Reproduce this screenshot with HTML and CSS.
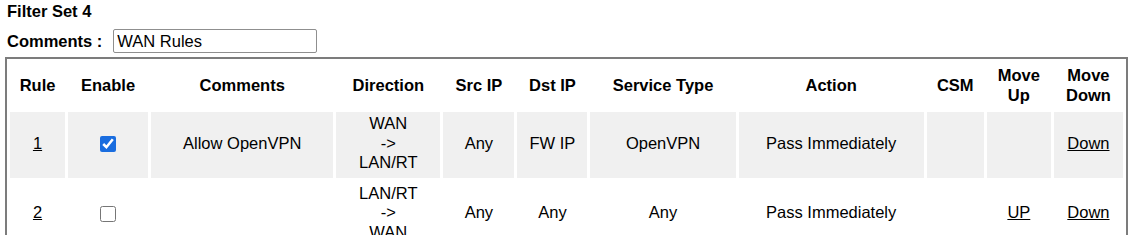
FILE: index.html
```html
<!DOCTYPE html>
<html lang="en">
<head>
    <meta charset="UTF-8">
    <title>Filter Set 4</title>
    <link rel="stylesheet" href="styles.css">
</head>
<body>
    <div class="page">
        <div class="set-title">Filter Set 4</div>
        <div class="comments-row">
            <label for="set-comments">Comments :</label>
            <input type="text" id="set-comments" class="comments-input" value="WAN Rules">
        </div>

        <table class="rules-table">
            <colgroup>
                <col style="width: 55px">
                <col style="width: 80px">
                <col style="width: 182px">
                <col style="width: 104px">
                <col style="width: 71px">
                <col style="width: 70px">
                <col style="width: 145px">
                <col style="width: 185px">
                <col style="width: 57px">
                <col style="width: 64px">
                <col style="width: 69px">
            </colgroup>
            <thead>
                <tr>
                    <th>Rule</th>
                    <th>Enable</th>
                    <th>Comments</th>
                    <th>Direction</th>
                    <th>Src IP</th>
                    <th>Dst IP</th>
                    <th>Service Type</th>
                    <th>Action</th>
                    <th>CSM</th>
                    <th>Move<br>Up</th>
                    <th>Move<br>Down</th>
                </tr>
            </thead>
            <tbody>
                <tr class="odd">
                    <td><a href="#">1</a></td>
                    <td><input type="checkbox" class="enable-box" checked></td>
                    <td>Allow OpenVPN</td>
                    <td>WAN<br>-&gt;<br>LAN/RT</td>
                    <td>Any</td>
                    <td>FW IP</td>
                    <td>OpenVPN</td>
                    <td>Pass Immediately</td>
                    <td></td>
                    <td></td>
                    <td><a href="#">Down</a></td>
                </tr>
                <tr>
                    <td><a href="#">2</a></td>
                    <td><input type="checkbox" class="enable-box"></td>
                    <td></td>
                    <td>LAN/RT<br>-&gt;<br>WAN</td>
                    <td>Any</td>
                    <td>Any</td>
                    <td>Any</td>
                    <td>Pass Immediately</td>
                    <td></td>
                    <td><a href="#">UP</a></td>
                    <td><a href="#">Down</a></td>
                </tr>
            </tbody>
        </table>
    </div>
</body>
</html>
```

FILE: styles.css
```css
body {
    font-family: 'Liberation Sans', Arial, sans-serif;
    font-size: 16.5px;
    color: #000;
    margin: 0;
    background-color: white;
}
.page {
    padding: 1px 5px 0 5px;
}
.set-title {
    font-weight: bold;
    line-height: 20px;
    padding-left: 2px;
}
.comments-row {
    display: flex;
    align-items: center;
    gap: 11px;
    margin-top: 8px;
    padding-left: 2px;
}
.comments-row label {
    font-weight: bold;
}
.comments-input {
    width: 204px;
    height: 24px;
    box-sizing: border-box;
    border: 1px solid #8f8f8f;
    border-radius: 2px;
    padding: 0 3px;
    font-family: inherit;
    font-size: 16.5px;
    color: #000;
}
.rules-table {
    margin-top: 4px;
    width: 1123px;
    table-layout: fixed;
    border: 2px solid #7c7c7c;
    border-spacing: 3.5px 4px;
    line-height: 19.5px;
}
.rules-table th {
    font-weight: bold;
    text-align: center;
    vertical-align: middle;
    padding: 3px 2px;
}
.rules-table td {
    text-align: center;
    vertical-align: middle;
    padding: 2px 2px 5px 2px;
}
.rules-table tr.odd td {
    background-color: #f0f0f0;
}
.rules-table a {
    color: #000;
    text-decoration: underline;
}
.enable-box {
    width: 16px;
    height: 16px;
    margin: 0;
    vertical-align: middle;
    accent-color: #1a6ddf;
}
```
